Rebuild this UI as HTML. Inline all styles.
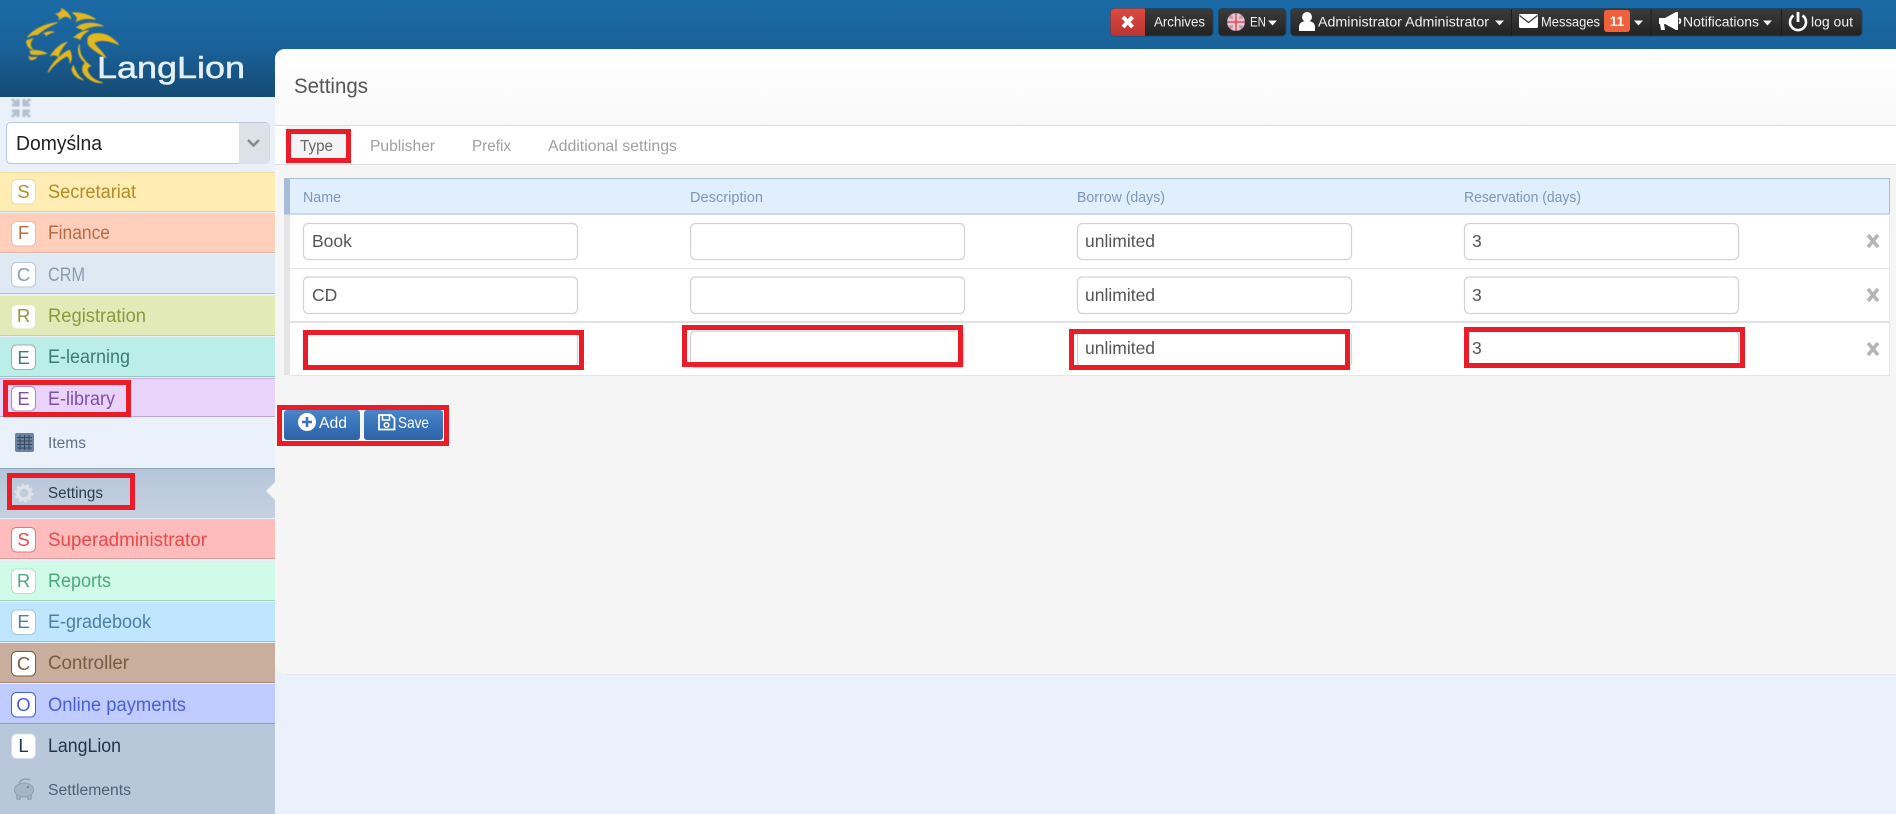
<!DOCTYPE html>
<html lang="en">
<head>
<meta charset="utf-8">
<title>LangLion Settings</title>
<style>
html,body{margin:0;padding:0;width:1896px;height:814px;overflow:hidden;background:#ebf1fa}
svg{display:block}
text{font-family:"Liberation Sans",sans-serif}
.m{font-size:19px}
.s{font-size:15.5px}
.t{font-size:13.5px;fill:#f2f2f2}
.h{font-size:14.5px;fill:#7e96b8}
.i{font-size:17.5px;fill:#555}
.b{font-size:18.5px;text-anchor:middle}
.tab{font-size:15.5px;fill:#a0a0a0}
.r{fill:none;stroke:#ea1c27;stroke-width:5}
.bd{fill:#fff;stroke-width:1}
.inp{fill:#fff;stroke:#d2d2d2;stroke-width:1.2}
.x{fill:none;stroke:#b5b5b5;stroke-width:3.6;stroke-linecap:butt}
.y{fill:#e4b81c;stroke:#e4b81c;stroke-width:2.5}
</style>
</head>
<body>
<svg xmlns="http://www.w3.org/2000/svg" width="1896" height="814" viewBox="0 0 1896 814">
<defs>
<linearGradient id="top" x1="0" y1="0" x2="0" y2="1"><stop offset="0" stop-color="#1b6ba6"/><stop offset=".5" stop-color="#1a6199"/><stop offset="1" stop-color="#154a73"/></linearGradient>
<linearGradient id="title" x1="0" y1="0" x2="0" y2="1"><stop offset="0" stop-color="#fff"/><stop offset="1" stop-color="#f9f9f9"/></linearGradient>
<linearGradient id="dark" x1="0" y1="0" x2="0" y2="1"><stop offset="0" stop-color="#3c3c3c"/><stop offset="1" stop-color="#222"/></linearGradient>
<linearGradient id="red" x1="0" y1="0" x2="0" y2="1"><stop offset="0" stop-color="#dd4a44"/><stop offset="1" stop-color="#b93431"/></linearGradient>
<linearGradient id="btn" x1="0" y1="0" x2="0" y2="1"><stop offset="0" stop-color="#4a85c9"/><stop offset=".45" stop-color="#3a74ba"/><stop offset="1" stop-color="#2c63a9"/></linearGradient>
<linearGradient id="set" x1="0" y1="0" x2="0" y2="1"><stop offset="0" stop-color="#b5c5d9"/><stop offset="1" stop-color="#c6d2e1"/></linearGradient>
<clipPath id="flag"><circle cx="1236" cy="22" r="9"/></clipPath>
<filter id="soft"><feGaussianBlur stdDeviation="1.5"/></filter>
<filter id="soft2"><feGaussianBlur stdDeviation=".5"/></filter>
</defs>

<!-- page / header -->
<rect width="1896" height="814" fill="#ebf1fa"/>
<rect width="1896" height="97" fill="url(#top)"/>

<!-- content panel -->
<path d="M275 59a10 10 0 0 1 10-10H1896V674H285a10 10 0 0 1-10-10Z" fill="#f5f5f5"/>
<path d="M275 125V59a10 10 0 0 1 10-10H1896V125Z" fill="url(#title)"/>
<rect x="285" y="674" width="1611" height="1" fill="#e3e8f0"/>
<text x="294" y="93" font-size="21" fill="#555" textLength="74" lengthAdjust="spacingAndGlyphs">Settings</text>

<!-- tabs -->
<rect x="275" y="125" width="1621" height="39" fill="#fff"/>
<rect x="275" y="125" width="1621" height="1" fill="#ddd"/>
<rect x="275" y="164" width="1621" height="1" fill="#ddd"/>
<rect x="285" y="126" width="66" height="38" fill="#f4f4f4"/>
<text x="300" y="151" font-size="15.500" fill="#666" textLength="33" lengthAdjust="spacingAndGlyphs">Type</text>
<text x="370" y="151" class="tab" textLength="65" lengthAdjust="spacingAndGlyphs">Publisher</text>
<text x="472" y="151" class="tab" textLength="39" lengthAdjust="spacingAndGlyphs">Prefix</text>
<text x="548" y="151" class="tab" textLength="129" lengthAdjust="spacingAndGlyphs">Additional settings</text>

<!-- table -->
<rect x="290" y="214" width="1600" height="161" fill="#fff"/>
<rect x="284" y="214" width="6" height="161" fill="#e5e5e5"/>
<rect x="284" y="178" width="1606" height="36" fill="#e1eefe"/>
<rect x="284" y="178" width="6" height="36" fill="#a4bcd9"/>
<rect x="284" y="178" width="1606" height="1" fill="#a9bdd6"/>
<rect x="284" y="213.500" width="1606" height="1" fill="#a9bdd6"/>
<rect x="1889" y="178" width="1" height="36" fill="#a9bdd6"/>
<rect x="290" y="268" width="1600" height="1" fill="#e4e4e4"/>
<rect x="290" y="321" width="1600" height="2" fill="#e2e2e2"/>
<rect x="290" y="375" width="1600" height="1" fill="#e6e6e6"/>
<rect x="1889" y="214" width="1" height="161" fill="#e6e6e6"/>
<text x="303" y="202" class="h" textLength="38" lengthAdjust="spacingAndGlyphs">Name</text>
<text x="690" y="202" class="h" textLength="73" lengthAdjust="spacingAndGlyphs">Description</text>
<text x="1077" y="202" class="h" textLength="88" lengthAdjust="spacingAndGlyphs">Borrow (days)</text>
<text x="1464" y="202" class="h" textLength="117" lengthAdjust="spacingAndGlyphs">Reservation (days)</text>

<!-- inputs -->
<rect class="inp" x="303.500" y="223.500" width="274" height="36" rx="5"/>
<rect class="inp" x="690.500" y="223.500" width="274" height="36" rx="5"/>
<rect class="inp" x="1077.500" y="223.500" width="274" height="36" rx="5"/>
<rect class="inp" x="1464.500" y="223.500" width="274" height="36" rx="5"/>
<rect class="inp" x="303.500" y="277" width="274" height="36.500" rx="5"/>
<rect class="inp" x="690.500" y="277" width="274" height="36.500" rx="5"/>
<rect class="inp" x="1077.500" y="277" width="274" height="36.500" rx="5"/>
<rect class="inp" x="1464.500" y="277" width="274" height="36.500" rx="5"/>
<rect class="inp" x="303.500" y="331" width="274" height="36" rx="5"/>
<rect class="inp" x="690.500" y="331" width="273.500" height="36.500" rx="5"/>
<rect class="inp" x="1077.500" y="331" width="274" height="36" rx="5"/>
<rect class="inp" x="1464.500" y="331" width="274" height="36" rx="5"/>
<text x="312" y="247" class="i">Book</text>
<text x="312" y="301" class="i">CD</text>
<text x="1085" y="247" class="i">unlimited</text>
<text x="1085" y="301" class="i">unlimited</text>
<text x="1085" y="354" class="i">unlimited</text>
<text x="1472" y="247" class="i">3</text>
<text x="1472" y="301" class="i">3</text>
<text x="1472" y="354" class="i">3</text>
<path class="x" d="M1868 235l10 12m0-12l-10 12M1868 289l10 12m0-12l-10 12M1868 343l10 12m0-12l-10 12"/>

<!-- buttons -->
<rect x="284" y="410" width="76" height="30" rx="3" fill="url(#btn)"/>
<rect x="364" y="410" width="79" height="30" rx="3" fill="url(#btn)"/>
<circle cx="307" cy="422" r="9" fill="#fff"/>
<path d="M307 417v10M302 422h10" stroke="#3a74ba" stroke-width="2.600"/>
<text x="319" y="428" font-size="16" fill="#fff" textLength="28" lengthAdjust="spacingAndGlyphs">Add</text>
<path d="M379 415h12l3.500 3.500V429.500H379Z" fill="none" stroke="#fff" stroke-width="1.800"/>
<path d="M382.500 415.500v4.500h7v-4.500" fill="none" stroke="#fff" stroke-width="1.500"/>
<circle cx="386.500" cy="425" r="2.300" fill="none" stroke="#fff" stroke-width="1.500"/>
<text x="398" y="428" font-size="16" fill="#fff" textLength="31" lengthAdjust="spacingAndGlyphs">Save</text>

<!-- logo -->
<g transform="translate(20 4) scale(.33333)" filter="url(#soft)">
<path class="y" d="M108 30C120 28 128 20 124 14C138 20 150 32 152 44C142 34 130 36 118 46C120 38 116 34 108 30Z"/>
<path class="y" d="M158 27C178 24 208 32 226 46C206 41 186 43 168 52C176 44 172 36 158 27Z"/>
<path class="y" d="M22 100C42 76 74 60 112 56C88 66 68 78 52 92C42 91 32 95 22 100Z"/>
<path class="y" d="M72 88C82 83 92 82 102 84C92 86 84 90 78 95C78 91 76 89 72 88Z"/>
<path class="y" d="M20 110L38 104C30 115 28 127 38 136C27 134 19 124 20 110Z"/>
<path class="y" d="M30 141C46 138 64 140 80 148C64 152 48 153 33 150Z"/>
<path class="y" d="M27 158C34 161 42 161 50 159C46 166 36 169 30 166Z"/>
<path class="y" d="M170 70C190 54 222 54 250 66C230 64 206 68 190 78C184 74 176 72 170 70Z"/>
<path class="y" d="M162 100C176 88 190 80 205 80C192 88 184 96 180 106C174 102 168 100 162 100Z"/>
<path class="y" d="M205 100C215 85 250 85 272 100C282 108 290 114 296 122C270 110 240 104 222 116C226 128 245 138 258 162C240 148 216 138 205 122C203 114 203 106 205 100Z"/>
<path class="y" d="M178 122C176 150 190 170 212 186C198 190 198 204 218 222C228 230 238 234 248 236C226 238 204 228 190 206C184 192 190 184 196 176C180 164 170 144 178 122Z"/>
<path class="y" d="M92 155C102 140 118 122 140 115C128 128 120 140 114 158C108 152 100 152 92 155Z"/>
<path class="y" d="M84 205C94 180 120 152 148 138C156 150 156 166 150 176C150 164 146 158 140 156C120 166 100 184 84 205Z"/>
<path class="y" d="M160 185C166 200 172 216 190 228C172 224 160 212 156 198C156 192 158 188 160 185Z"/>
</g>
<text x="97" y="78" font-size="31" fill="#e4eff8" stroke="#e4eff8" stroke-width=".5" textLength="148" lengthAdjust="spacingAndGlyphs">LangLion</text>

<!-- top bar -->
<rect x="1110.500" y="8.500" width="102.500" height="27.500" rx="4" fill="url(#dark)" stroke="#1c4568"/>
<path d="M1145 8.500h-30.500a4 4 0 0 0-4 4V32a4 4 0 0 0 4 4H1145Z" fill="url(#red)"/>
<path d="M1123 17l9.500 10m0-10l-9.500 10" stroke="#fff" stroke-width="4"/>
<text x="1154" y="26.500" class="t" textLength="51" lengthAdjust="spacingAndGlyphs">Archives</text>

<rect x="1218.500" y="8.500" width="67.500" height="27.500" rx="4" fill="url(#dark)" stroke="#1c4568"/>
<g clip-path="url(#flag)" filter="url(#soft2)">
<rect x="1227" y="13" width="18" height="18" fill="#b8bfd2"/>
<path d="M1227 13L1245 31M1245 13L1227 31" stroke="#e08a94" stroke-width="2.500"/>
<path d="M1236 13V31M1227 22H1245" stroke="#f8eef0" stroke-width="5"/>
<path d="M1236 13V31M1227 22H1245" stroke="#d55a68" stroke-width="2.500"/>
</g>
<text x="1250" y="26.500" class="t" textLength="16" lengthAdjust="spacingAndGlyphs">EN</text>
<path d="M1268 20.500h9l-4.500 5Z" fill="#f2f2f2"/>

<rect x="1290.500" y="8.500" width="571.500" height="27.500" rx="4" fill="url(#dark)" stroke="#1c4568"/>
<path d="M1511.500 9v27M1651 9v27M1781.500 9v27" stroke="#1d1d1d"/>
<circle cx="1307" cy="17" r="5" fill="#fff"/>
<path d="M1299 31v-4c0-4 3-6 8-6s8 2 8 6v4Z" fill="#fff"/>
<text x="1318" y="26.500" class="t" textLength="171" lengthAdjust="spacingAndGlyphs">Administrator Administrator</text>
<path d="M1495 20.500h9l-4.500 5Z" fill="#f2f2f2"/>
<rect x="1519" y="14" width="19" height="14" rx="1.500" fill="#fff"/>
<path d="M1519.500 15.500l9 7 9-7" fill="none" stroke="#333" stroke-width="1.200"/>
<text x="1541" y="26.500" class="t" textLength="59" lengthAdjust="spacingAndGlyphs">Messages</text>
<rect x="1604" y="10" width="26" height="22" rx="3" fill="#f0603a"/>
<text x="1617" y="26" font-size="13.500" font-weight="700" fill="#fff" text-anchor="middle">11</text>
<path d="M1634 20.500h9l-4.500 5Z" fill="#f2f2f2"/>
<path d="M1659 18h6l11-6h2v18h-2l-11-6h-1l1 6h-4l-1-6h-1Z" fill="#fff"/>
<path d="M1679 18.500a3 3 0 0 1 0 5" fill="none" stroke="#fff" stroke-width="1.800"/>
<text x="1683" y="26.500" class="t" textLength="76" lengthAdjust="spacingAndGlyphs">Notifications</text>
<path d="M1763 20.500h9l-4.500 5Z" fill="#f2f2f2"/>
<path d="M1793.500 15.500a8 8 0 1 0 9 0" fill="none" stroke="#fff" stroke-width="2.600"/>
<path d="M1798 12v10" stroke="#fff" stroke-width="2.800"/>
<text x="1811" y="26.500" class="t" textLength="42" lengthAdjust="spacingAndGlyphs">log out</text>

<!-- sidebar -->
<rect x="0" y="97" width="275" height="717" fill="#eaf1fa"/>
<g filter="url(#soft2)"><path d="M12 99l6 6m-6 0h6v-6M30 99l-6 6m6 0h-6v-6M12 117l6-6m-6 0h6v6M30 117l-6-6m6 0h-6v6" fill="none" stroke="#b3bfce" stroke-width="3"/></g>
<rect x="6.500" y="122.500" width="262.500" height="41" rx="4" fill="#fff" stroke="#b9c8d9"/>
<path d="M239 123h27a3 3 0 0 1 3 3v35a3 3 0 0 1-3 3h-27Z" fill="#dde2e8"/>
<path d="M248 140l5.500 5.500 5.500-5.500" fill="none" stroke="#7f8a97" stroke-width="2.400"/>
<text x="16" y="150" font-size="20" fill="#222" textLength="86" lengthAdjust="spacingAndGlyphs">Domyślna</text>

<!-- menu rows -->
<rect y="172" width="275" height="40" fill="#ffedb3"/><rect y="172" width="275" height="1" fill="#f0dca0"/><rect y="211" width="275" height="1" fill="#e3cd8c"/>
<rect y="213" width="275" height="40" fill="#ffcfbc"/><rect y="252" width="275" height="1" fill="#e0b5a4"/>
<rect y="254" width="275" height="40" fill="#dfe9f4"/><rect y="293" width="275" height="1" fill="#b4c0cf"/>
<rect y="296" width="275" height="40" fill="#e2ebb8"/><rect y="335" width="275" height="1" fill="#c6d098"/>
<rect y="337" width="275" height="40" fill="#bbeee8"/><rect y="376" width="275" height="1" fill="#97c7c2"/>
<rect y="378" width="275" height="39" fill="#ead3fb"/><rect y="416" width="275" height="1" fill="#bda6d2"/><rect y="378" width="275" height="1" fill="#c5aedb"/>
<rect y="417" width="275" height="51" fill="#ebf1fa"/>
<rect y="468" width="275" height="50" fill="url(#set)"/><rect y="468" width="275" height="1" fill="#8fa3ba"/>
<rect y="519" width="275" height="40" fill="#ffbcbc"/><rect y="558" width="275" height="1" fill="#de9a9a"/>
<rect y="561" width="275" height="40" fill="#cffbe8"/><rect y="600" width="275" height="1" fill="#9fd2ba"/>
<rect y="602" width="275" height="40" fill="#bfe5ff"/><rect y="641" width="275" height="1" fill="#97bcd8"/>
<rect y="643" width="275" height="40" fill="#c9ae9e"/><rect y="682" width="275" height="1" fill="#a88d7d"/>
<rect y="684" width="275" height="40" fill="#c0cbff"/><rect y="723" width="275" height="1" fill="#8d98dc"/>
<rect y="724" width="275" height="90" fill="#b8c7d9"/>
<path d="M275 482v18l-9-9Z" fill="#f5f5f5"/>

<!-- badges -->
<rect class="bd" x="11.500" y="179.500" width="24" height="24.500" rx="5" stroke="#f2dc9c"/>
<rect class="bd" x="11.500" y="221.500" width="24" height="24.500" rx="5" stroke="#eabba6"/>
<rect class="bd" x="11.500" y="262.500" width="24" height="24.500" rx="5" stroke="#b8c7d9"/>
<rect class="bd" x="11.500" y="304.500" width="24" height="24.500" rx="5" stroke="#e2ebb8"/>
<rect class="bd" x="11.500" y="345" width="24" height="24.500" rx="5" stroke="#8fb5b0"/>
<rect class="bd" x="11.500" y="386.500" width="24" height="24.500" rx="5" stroke="#a98ac8"/>
<rect class="bd" x="11.500" y="527.500" width="24" height="24.500" rx="5" stroke="#e07a7a"/>
<rect class="bd" x="11.500" y="569" width="24" height="24.500" rx="5" stroke="#b4e0cc"/>
<rect class="bd" x="11.500" y="610" width="24" height="24.500" rx="5" stroke="#a5c5dc"/>
<rect class="bd" x="11.500" y="651.500" width="24" height="24.500" rx="5" stroke="#7a5a42"/>
<rect class="bd" x="11.500" y="692.500" width="24" height="24.500" rx="5" stroke="#4b5fd9"/>
<rect class="bd" x="11.500" y="734" width="24" height="24.500" rx="5" stroke="#d5deea"/>

<text x="23.500" y="198" class="b" fill="#b68a26">S</text>
<text x="23.500" y="239" class="b" fill="#b96a47">F</text>
<text x="23.500" y="281" class="b" fill="#8a9bb0">C</text>
<text x="23.500" y="322" class="b" fill="#8a9a3d">R</text>
<text x="23.500" y="364" class="b" fill="#3d7b75">E</text>
<text x="23.500" y="405" class="b" fill="#7c50ab">E</text>
<text x="23.500" y="546" class="b" fill="#e84a4a">S</text>
<text x="23.500" y="587" class="b" fill="#4ea982">R</text>
<text x="23.500" y="628" class="b" fill="#4d7fa5">E</text>
<text x="23.500" y="670" class="b" fill="#7a5a42">C</text>
<text x="23.500" y="711" class="b" fill="#4b5fd9">O</text>
<text x="23.500" y="752" class="b" fill="#203450">L</text>

<text x="48" y="198" class="m" fill="#b68a26" textLength="88" lengthAdjust="spacingAndGlyphs">Secretariat</text>
<text x="48" y="239" class="m" fill="#b96a47" textLength="62" lengthAdjust="spacingAndGlyphs">Finance</text>
<text x="48" y="281" class="m" fill="#8a9bb0" textLength="37" lengthAdjust="spacingAndGlyphs">CRM</text>
<text x="48" y="322" class="m" fill="#8a9a3d" textLength="98" lengthAdjust="spacingAndGlyphs">Registration</text>
<text x="48" y="363" class="m" fill="#3d7b75" textLength="82" lengthAdjust="spacingAndGlyphs">E-learning</text>
<text x="48" y="405" class="m" fill="#7c50ab" textLength="67" lengthAdjust="spacingAndGlyphs">E-library</text>
<text x="48" y="448" class="s" fill="#5f7088" textLength="38" lengthAdjust="spacingAndGlyphs">Items</text>
<text x="48" y="498" class="s" fill="#2a3c55" textLength="55" lengthAdjust="spacingAndGlyphs">Settings</text>
<text x="48" y="546" class="m" fill="#e84a4a" textLength="159" lengthAdjust="spacingAndGlyphs">Superadministrator</text>
<text x="48" y="587" class="m" fill="#4ea982" textLength="63" lengthAdjust="spacingAndGlyphs">Reports</text>
<text x="48" y="628" class="m" fill="#4d7fa5" textLength="103" lengthAdjust="spacingAndGlyphs">E-gradebook</text>
<text x="48" y="669" class="m" fill="#7a5a42" textLength="81" lengthAdjust="spacingAndGlyphs">Controller</text>
<text x="48" y="711" class="m" fill="#4b5fd9" textLength="138" lengthAdjust="spacingAndGlyphs">Online payments</text>
<text x="48" y="752" class="m" fill="#203450" textLength="73" lengthAdjust="spacingAndGlyphs">LangLion</text>
<text x="48" y="795" class="s" fill="#4c6078" textLength="83" lengthAdjust="spacingAndGlyphs">Settlements</text>

<!-- sidebar icons -->
<rect x="15" y="433" width="19" height="19" rx="2" fill="#6b83a0"/>
<path d="M17 437.500h15M17 441h15M17 444.500h15M17 448h15M20 435v15M24.500 435v15M29 435v15" stroke="#34495f" stroke-width="1"/>
<circle cx="24" cy="493" r="6" fill="none" stroke="#dfe2e6" stroke-width="3.500"/>
<circle cx="24" cy="493" r="8.500" fill="none" stroke="#dfe2e6" stroke-width="1.800" stroke-dasharray="2.600 2.700"/>
<ellipse cx="24" cy="790" rx="9.500" ry="7" fill="#a6b6c8" stroke="#8fa1b6"/>
<path d="M17 795v4h3v-3M28 796v3h3v-4M19 783c2-4 8-5 11-3" fill="none" stroke="#8fa1b6" stroke-width="1.500"/>
<circle cx="28" cy="787" r="1" fill="#66788e"/>

<!-- annotation boxes -->
<rect class="r" x="288.500" y="131.500" width="60" height="29"/>
<rect class="r" x="5.500" y="382.500" width="123" height="32"/>
<rect class="r" x="9.500" y="475.500" width="123" height="32"/>
<rect class="r" x="305.500" y="332.500" width="276" height="35"/>
<rect class="r" x="684.500" y="327.500" width="276" height="37"/>
<rect class="r" x="1071.500" y="331.500" width="276" height="36"/>
<rect class="r" x="1466.500" y="329.500" width="276" height="36"/>
<rect class="r" x="279.500" y="407.500" width="167" height="36"/>
</svg>
</body>
</html>
